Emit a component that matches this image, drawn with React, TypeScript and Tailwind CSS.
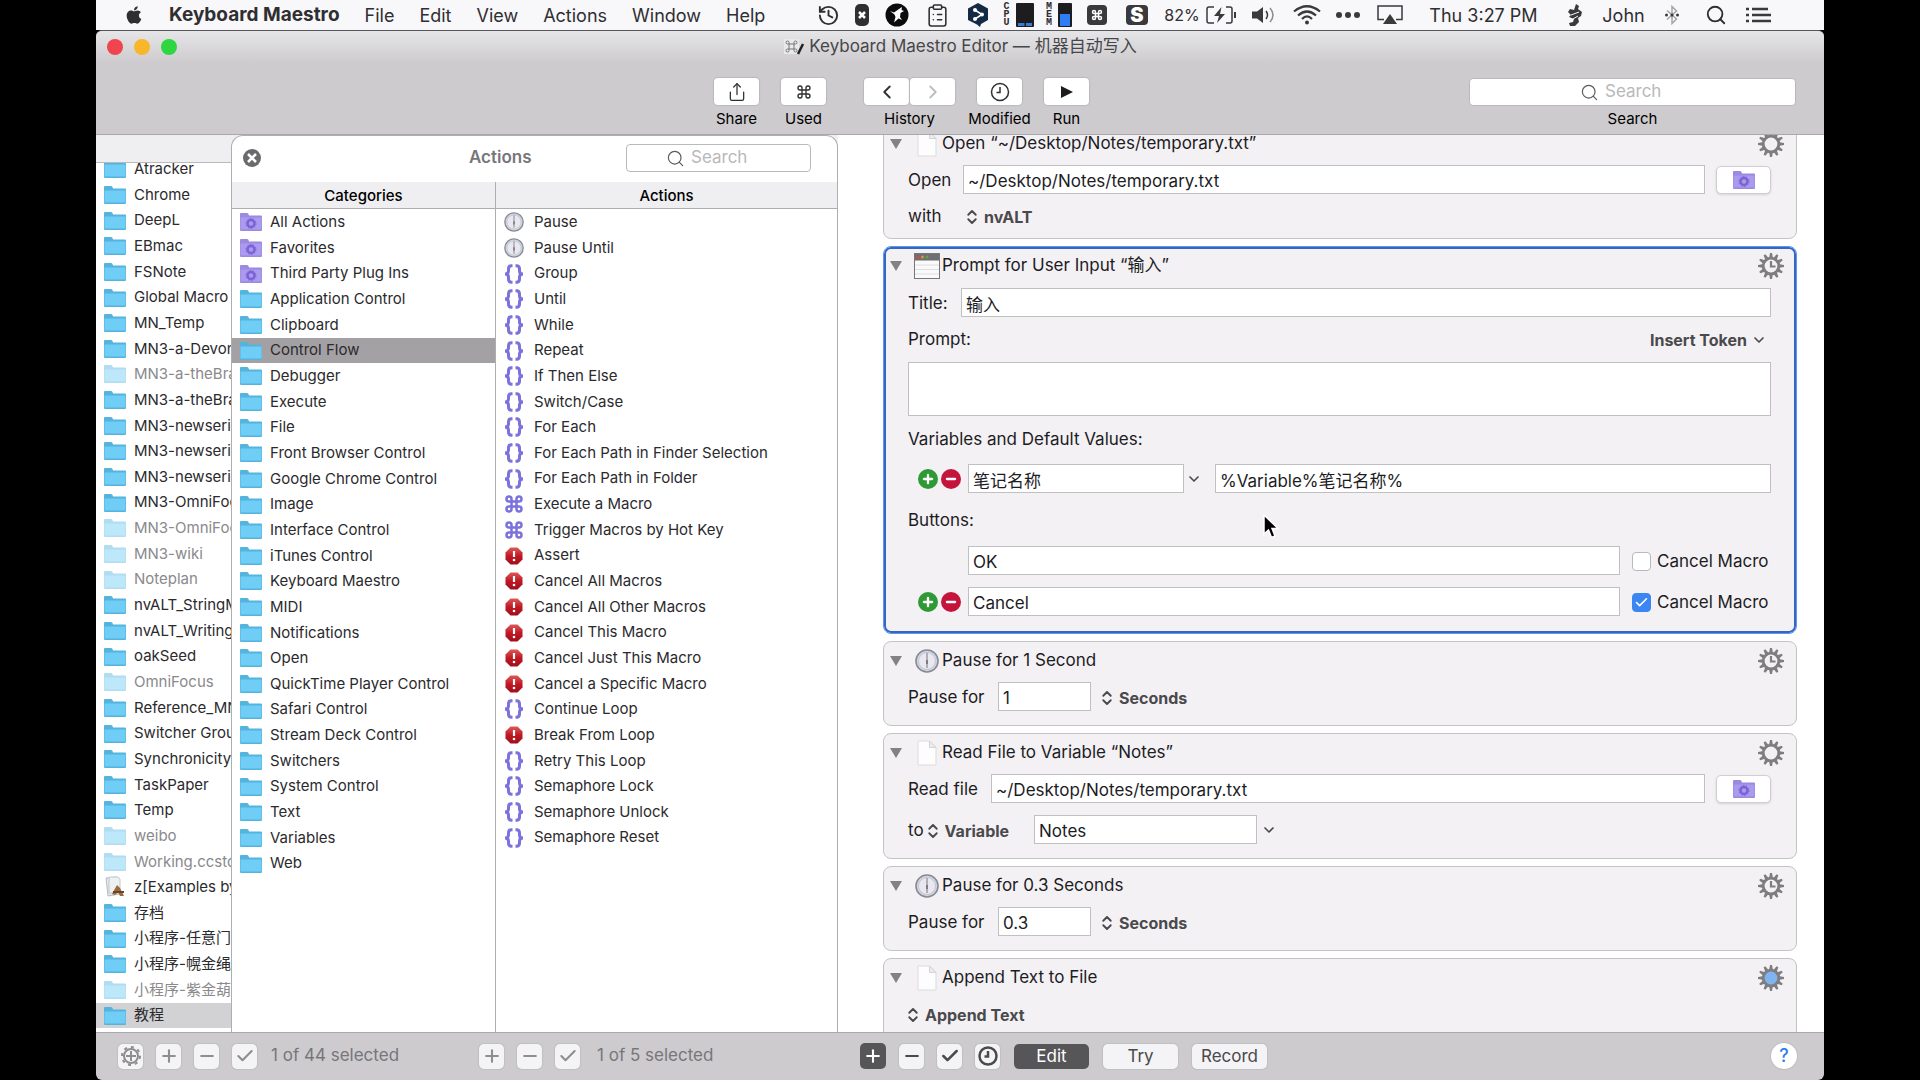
import React from 'react';
import { FaApple } from 'react-icons/fa';
import { Check, ChevronDown, ChevronLeft, ChevronRight, ChevronsUpDown, ClipboardList, Command, History, Minus, Plus, Search, Share } from 'lucide-react';

type Kind = 'folder' | 'smart' | 'file' | 'pause' | 'braces' | 'command' | 'stop';

interface Row {
  name: string;
  kind?: Kind;
  dim?: boolean;
}

const macroGroups: Row[] = [
  { name: 'Atracker' },
  { name: 'Chrome' },
  { name: 'DeepL' },
  { name: 'EBmac' },
  { name: 'FSNote' },
  { name: 'Global Macro' },
  { name: 'MN_Temp' },
  { name: 'MN3-a-Devonthink' },
  { name: 'MN3-a-theBrain', dim: true },
  { name: 'MN3-a-theBrain' },
  { name: 'MN3-newseries' },
  { name: 'MN3-newseries' },
  { name: 'MN3-newseries' },
  { name: 'MN3-OmniFocus' },
  { name: 'MN3-OmniFocus', dim: true },
  { name: 'MN3-wiki', dim: true },
  { name: 'Noteplan', dim: true },
  { name: 'nvALT_StringMN' },
  { name: 'nvALT_Writing' },
  { name: 'oakSeed' },
  { name: 'OmniFocus', dim: true },
  { name: 'Reference_MN' },
  { name: 'Switcher Group' },
  { name: 'Synchronicity' },
  { name: 'TaskPaper' },
  { name: 'Temp' },
  { name: 'weibo', dim: true },
  { name: 'Working.ccstore', dim: true },
  { name: 'z[Examples by', kind: 'file' },
  { name: '存档' },
  { name: '小程序-任意门' },
  { name: '小程序-幌金绳' },
  { name: '小程序-紫金葫芦', dim: true },
  { name: '教程' },
];

const categories: Row[] = [
  { name: 'All Actions', kind: 'smart' },
  { name: 'Favorites', kind: 'smart' },
  { name: 'Third Party Plug Ins', kind: 'smart' },
  { name: 'Application Control' },
  { name: 'Clipboard' },
  { name: 'Control Flow' },
  { name: 'Debugger' },
  { name: 'Execute' },
  { name: 'File' },
  { name: 'Front Browser Control' },
  { name: 'Google Chrome Control' },
  { name: 'Image' },
  { name: 'Interface Control' },
  { name: 'iTunes Control' },
  { name: 'Keyboard Maestro' },
  { name: 'MIDI' },
  { name: 'Notifications' },
  { name: 'Open' },
  { name: 'QuickTime Player Control' },
  { name: 'Safari Control' },
  { name: 'Stream Deck Control' },
  { name: 'Switchers' },
  { name: 'System Control' },
  { name: 'Text' },
  { name: 'Variables' },
  { name: 'Web' },
];

const actions: Row[] = [
  { name: 'Pause', kind: 'pause' },
  { name: 'Pause Until', kind: 'pause' },
  { name: 'Group', kind: 'braces' },
  { name: 'Until', kind: 'braces' },
  { name: 'While', kind: 'braces' },
  { name: 'Repeat', kind: 'braces' },
  { name: 'If Then Else', kind: 'braces' },
  { name: 'Switch/Case', kind: 'braces' },
  { name: 'For Each', kind: 'braces' },
  { name: 'For Each Path in Finder Selection', kind: 'braces' },
  { name: 'For Each Path in Folder', kind: 'braces' },
  { name: 'Execute a Macro', kind: 'command' },
  { name: 'Trigger Macros by Hot Key', kind: 'command' },
  { name: 'Assert', kind: 'stop' },
  { name: 'Cancel All Macros', kind: 'stop' },
  { name: 'Cancel All Other Macros', kind: 'stop' },
  { name: 'Cancel This Macro', kind: 'stop' },
  { name: 'Cancel Just This Macro', kind: 'stop' },
  { name: 'Cancel a Specific Macro', kind: 'stop' },
  { name: 'Continue Loop', kind: 'braces' },
  { name: 'Break From Loop', kind: 'stop' },
  { name: 'Retry This Loop', kind: 'braces' },
  { name: 'Semaphore Lock', kind: 'braces' },
  { name: 'Semaphore Unlock', kind: 'braces' },
  { name: 'Semaphore Reset', kind: 'braces' },
];

/* ---------- Icons ---------- */

const FolderIcon = ({ smart = false }: { smart?: boolean }) => (
  <svg width="22" height="20" viewBox="0 0 22 20" className="shrink-0">
    <path d="M0 2 Q0 1 1 1 H7 Q8 1 8.500 2 L9 3.500 H21 Q22 3.500 22 4.500 V18 Q22 19 21 19 H1 Q0 19 0 18 Z" fill={smart ? '#9a8ae0' : '#55b4de'} />
    <path d="M0.500 5.500 H21.500 V17.500 H0.500 Z" fill={smart ? '#ab9bee' : '#6fcdf6'} />
    {smart && <circle cx="11" cy="11.500" r="3.500" fill="none" stroke="#7b63d6" strokeWidth="2.500" />}
    {smart && <circle cx="11" cy="11.500" r="5" fill="none" stroke="#7b63d6" strokeWidth="1" strokeDasharray="1.500 1.600" />}
  </svg>
);

const ExamplesIcon = () => (
  <svg width="22" height="22" viewBox="0 0 22 22" className="shrink-0">
    <path d="M2 2 L13 1 L16 18 L4 20 Z" fill="#e4e8ea" stroke="#b6bcc0" strokeWidth="1" />
    <path d="M5 1 H14 L16 3 V17 H5 Z" fill="#eef1f2" stroke="#c4c8ca" strokeWidth="1" />
    <path d="M8 18 L13 9 L16 12 L20 20 H16 L14 16 L11 19 Z" fill="#9a6b42" />
    <path d="M9 16 H20" stroke="#6a4526" strokeWidth="2" />
  </svg>
);

const PauseIcon = ({ size = 20 }: { size?: number }) => (
  <svg width={size} height={size} viewBox="0 0 24 24" className="shrink-0">
    <circle cx="12" cy="12" r="11" fill="#d3d7e0" stroke="#878a94" strokeWidth="1.600" />
    <circle cx="12" cy="12" r="8.500" fill="#e9e8f0" stroke="#c2c5d0" strokeWidth="1" />
    <path d="M12 4 V19" stroke="#9c949f" strokeWidth="1.400" />
    <path d="M12 11 V15" stroke="#7a7480" strokeWidth="1.800" />
  </svg>
);

const BracesIcon = () => (
  <svg width="20" height="20" viewBox="0 0 20 20" className="shrink-0" fill="none" stroke="#7b72dc" strokeWidth="3">
    <path d="M8.500 1.700 H7.500 Q4.500 1.700 4.500 5 V7 Q4.500 10 1 10 Q4.500 10 4.500 13 V15 Q4.500 18.300 7.500 18.300 H8.500" />
    <path d="M11.500 1.700 H12.500 Q15.500 1.700 15.500 5 V7 Q15.500 10 19 10 Q15.500 10 15.500 13 V15 Q15.500 18.300 12.500 18.300 H11.500" />
  </svg>
);

const StopIcon = () => (
  <svg width="20" height="20" viewBox="0 0 20 20" className="shrink-0">
    <defs>
      <linearGradient id="stopRed" x1="0" y1="0" x2="0" y2="1">
        <stop offset="0" stopColor="#dc5a5a" />
        <stop offset="0.500" stopColor="#bf1824" />
        <stop offset="1" stopColor="#a00f1c" />
      </linearGradient>
    </defs>
    <path d="M6.500 1.500 H13.500 L18.500 6.500 V13.500 L13.500 18.500 H6.500 L1.500 13.500 V6.500 Z" fill="url(#stopRed)" />
    <path d="M10 5 V11" stroke="#fff" strokeWidth="2.200" />
    <circle cx="10" cy="14" r="1.300" fill="#fff" />
  </svg>
);

const PageIcon = () => (
  <svg width="24" height="26" viewBox="0 0 24 26" className="shrink-0">
    <path d="M3 1 H14.500 L21 7.500 V25 H3 Z" fill="#fdfdfd" stroke="#dcdbdd" strokeWidth="1" />
    <path d="M14.500 1 V7.500 H21 Z" fill="#ececee" stroke="#d4d4d6" strokeWidth="1" />
  </svg>
);

const WindowIcon = () => (
  <svg width="26" height="26" viewBox="0 0 26 26" className="shrink-0">
    <rect x="0.500" y="0.500" width="25" height="25" fill="#fafafa" stroke="#77777a" />
    <rect x="1" y="1" width="24" height="6.500" fill="#706e70" />
    <circle cx="4" cy="4" r="1.500" fill="#d8473d" />
    <circle cx="8.500" cy="4" r="1.500" fill="#c9a13a" />
    <circle cx="13" cy="4" r="1.500" fill="#5da845" />
    <path d="M1 12 H25 M1 16.500 H25 M1 21 H25" stroke="#dedde0" />
  </svg>
);

const TEETH = [0, 30, 60, 90, 120, 150, 180, 210, 240, 270, 300, 330];

const GearIcon = ({ variant }: { variant: 'plain' | 'clock' | 'blue' }) => (
  <svg width="26" height="26" viewBox="0 0 26 26">
    {TEETH.map((angle) => (
      <path key={angle} d="M12 0 H14 L15 5.500 H11 Z" fill="#7e7d80" transform={`rotate(${angle} 13 13)`} />
    ))}
    <circle cx="13" cy="13" r="7.800" fill={variant === 'blue' ? '#7fb4f0' : '#f3f1f4'} stroke="#7e7d80" strokeWidth="2.800" />
    {variant === 'clock' && <path d="M13 8 V13.500 H17.500" fill="none" stroke="#7e7d80" strokeWidth="2.200" />}
  </svg>
);

const ClockIcon = ({ size = 20, strokeWidth = 2 }: { size?: number; strokeWidth?: number }) => (
  <svg width={size} height={size} viewBox="0 0 20 20" fill="none" stroke="currentColor" strokeWidth={strokeWidth}>
    <circle cx="10" cy="10" r="8.500" />
    <path d="M10 5 V10.500 H6.500" />
  </svg>
);

const rowIcon = (kind: Kind = 'folder') => {
  if (kind === 'smart') return <FolderIcon smart />;
  if (kind === 'file') return <ExamplesIcon />;
  if (kind === 'pause') return <PauseIcon />;
  if (kind === 'braces') return <BracesIcon />;
  if (kind === 'command') return <Command size={20} strokeWidth={3} className="shrink-0 text-[#7b72dc]" />;
  if (kind === 'stop') return <StopIcon />;
  return <FolderIcon />;
};

/* ---------- Menu bar ---------- */

const MenuBar = () => (
  <header className="flex h-[30px] shrink-0 items-center bg-[#f8f7fa] pr-12 pl-7 text-[18px] text-[#2f2e31]">
    <FaApple size={20} className="shrink-0" />
    <nav className="flex flex-1 items-center gap-[25px] pl-[25px] whitespace-nowrap">
      <button className="text-[19px] leading-6 font-bold">Keyboard Maestro</button>
      <button>File</button>
      <button>Edit</button>
      <button>View</button>
      <button>Actions</button>
      <button>Window</button>
      <button>Help</button>
    </nav>
    <div className="flex shrink-0 items-center *:flex *:shrink-0 *:items-center *:justify-center">
      <span className="w-[34px]"><History size={23} /></span>
      <span className="w-[33px]">
        <svg width="14" height="22" viewBox="0 0 14 22">
          <rect width="14" height="22" rx="5" fill="#2f2e31" />
          <path d="M4 8 L10 14 M10 8 L4 14" stroke="#fff" strokeWidth="2.500" />
        </svg>
      </span>
      <span className="w-[38px]">
        <svg width="24" height="24" viewBox="0 0 24 24">
          <circle cx="12" cy="12" r="11.500" fill="#0b0b0c" />
          <path d="M5 8 L9 9.500 L14 6 L17 4 L16.500 7 L19 8 L15.500 10 L15 14 L17 17 L13.500 15.500 L9 19.500 L10.500 14 L9.500 11.500 Z" fill="#fff" />
        </svg>
      </span>
      <span className="w-[42px]"><ClipboardList size={25} strokeWidth={1.5} /></span>
      <span className="w-[40px]">
        <svg width="22" height="26" viewBox="0 0 22 26">
          <path d="M11 1 L21 6.500 V18 L14 22 L13 25 L10 22.500 L1 18 V6.500 Z" fill="#142b45" />
          <path d="M8 8 L15 12.500 L8 17" fill="none" stroke="#fff" strokeWidth="1.500" />
          <circle cx="8" cy="8" r="2" fill="#fff" />
          <circle cx="15" cy="12.500" r="2" fill="#fff" />
          <circle cx="8" cy="17" r="2" fill="#fff" />
        </svg>
      </span>
      <span className="w-[41px] gap-1">
        <span className="w-2 font-['Liberation_Mono'] text-[10px] leading-[8px] font-bold break-all">CPU</span>
        <svg width="18" height="24" viewBox="0 0 18 24">
          <rect width="18" height="24" rx="1" fill="#1d1c1f" />
          <path d="M2 21.500 H8.500 M10 21.500 H16" stroke="#3a7ad0" strokeWidth="3" />
        </svg>
      </span>
      <span className="w-[40px] gap-1">
        <span className="w-2 font-['Liberation_Mono'] text-[10px] leading-[8px] font-bold break-all">MEM</span>
        <svg width="14" height="24" viewBox="0 0 14 24">
          <rect width="14" height="24" rx="1" fill="#1d1c1f" />
          <rect x="2" y="11" width="10" height="12" fill="#2e7cf6" />
        </svg>
      </span>
      <span className="w-[36px]">
        <span className="rounded-sm bg-[#3a393c] p-1 text-white"><Command size={12} strokeWidth={3} /></span>
      </span>
      <span className="w-[44px]">
        <span className="h-5 w-[22px] rounded-sm bg-[#3a393c] text-center text-[20px] leading-5 font-black text-white">S</span>
      </span>
      <span className="w-[82px] gap-1.5 text-[16px]">
        82%
        <svg width="30" height="18" viewBox="0 0 30 18" fill="none" stroke="#3a393c" strokeWidth="1.500">
          <path d="M8 1 H3 Q1 1 1 3 V15 Q1 17 3 17 H8 M20 1 H24 Q26 1 26 3 V15 Q26 17 24 17 H20" />
          <path d="M29 6 V12" strokeWidth="2" />
          <path d="M15.500 1 L8 10 H13 L11 17 L19 8 H14 Z" fill="#3a393c" stroke="none" />
        </svg>
      </span>
      <span className="w-[45px]">
        <svg width="24" height="20" viewBox="0 0 24 20" fill="none" stroke="#3a393c" strokeWidth="1.500">
          <path d="M0 6.500 H5 L11 2 V18 L5 13.500 H0 Z" fill="#3a393c" stroke="none" />
          <path d="M14 6 Q17 10 14 14" />
          <path d="M18 3 Q24 10 18 17" stroke="#8b8a8d" />
        </svg>
      </span>
      <span className="w-[41px]">
        <svg width="28" height="20" viewBox="0 0 28 20" fill="none" stroke="#3a393c" strokeWidth="2.200">
          <path d="M1 6.500 Q14 -4 27 6.500" />
          <path d="M5 10.500 Q14 2.500 23 10.500" />
          <path d="M9 14 Q14 9 19 14" />
          <circle cx="14" cy="17.500" r="2" fill="#3a393c" stroke="none" />
        </svg>
      </span>
      <span className="w-[41px] gap-[3px]">
        <i className="size-1.5 rounded-full bg-[#3a393c]" />
        <i className="size-1.5 rounded-full bg-[#3a393c]" />
        <i className="size-1.5 rounded-full bg-[#3a393c]" />
      </span>
      <span className="w-[43px]">
        <svg width="26" height="20" viewBox="0 0 26 20">
          <path d="M7 14.500 H1 V1 H25 V14.500 H19" fill="none" stroke="#3a393c" strokeWidth="1.500" />
          <path d="M13 9 L20 19 H6 Z" fill="#3a393c" />
        </svg>
      </span>
      <span className="w-[145px] whitespace-nowrap">Thu 3:27 PM</span>
      <span className="w-[38px]">
        <svg width="16" height="22" viewBox="0 0 16 22">
          <path d="M9 0 L12 2 L11 5 L15 8 L14 12 L11 14 L12 18 L8 22 H3 L2 19 L6 18 L7 15 L2 13 L4 11 L1 8 L3 5 L7 6 Z" fill="#3a393c" />
          <path d="M4 11 L12 8 M6 15 L11 12" stroke="#f8f7fa" strokeWidth="1" />
        </svg>
      </span>
      <span className="w-[59px]">John</span>
      <span className="w-[37px]">
        <svg width="16" height="20" viewBox="0 0 16 20" fill="none">
          <path d="M3 5.500 L12.500 14 L8 18.500 V1.500 L12.500 6 L3 14.500" stroke="#a5a4a7" strokeWidth="1.500" />
          <circle cx="2.500" cy="10" r="1.500" fill="#3a393c" />
          <circle cx="8" cy="10" r="1.500" fill="#3a393c" />
          <circle cx="13.500" cy="10" r="1.500" fill="#3a393c" />
        </svg>
      </span>
      <span className="w-[52px]"><Search size={22} /></span>
      <span className="w-[34px]">
        <svg width="26" height="16" viewBox="0 0 26 16" stroke="#3a393c" strokeWidth="2.500">
          <path d="M0 2 H3 M6 2 H22 M0 8 H3 M6 8 H25 M0 14 H3 M6 14 H25" />
        </svg>
      </span>
    </div>
  </header>
);

/* ---------- Title bar and toolbar ---------- */

const toolButton = 'flex h-[27px] w-[45px] items-center justify-center rounded-[4px] bg-white text-[#2f2e31] shadow-[0_0_1px_1px_#bab9bb]';

const ToolItem = ({ label, className, children }: { label: string; className: string; children: React.ReactNode }) => (
  <div className={`flex flex-col items-center gap-1.5 ${className}`}>
    <div className="flex gap-px">{children}</div>
    <span className="text-[15px] leading-4">{label}</span>
  </div>
);

const SearchField = () => (
  <span className="flex h-7 w-full items-center justify-center gap-1.5 rounded-[4px] border border-[#bab9bb] bg-white">
    <Search size={19} strokeWidth={1.5} className="text-[#5b5a5d]" />
    <input type="search" aria-label="Search" placeholder="Search" className="w-20 text-[17px] outline-none placeholder:text-[#b9b8bb]" />
  </span>
);

const TitleBar = () => (
  <div className="shrink-0 rounded-t-md border-t border-b border-t-[#57565a] border-b-[#a9a8aa] bg-[#cdcbce]">
    <div className="grid h-8 grid-cols-[1fr_auto_1fr] items-center rounded-t-md bg-linear-to-b from-[#e6e5e7] to-[#cdcbce]">
      <div className="flex gap-[11px] pl-[11px]">
        <button aria-label="Close" className="size-4 rounded-full bg-[#f0444f]" />
        <button aria-label="Minimize" className="size-4 rounded-full bg-[#f8b62b]" />
        <button aria-label="Zoom" className="size-4 rounded-full bg-[#2fd640]" />
      </div>
      <h1 className="flex items-center gap-1 text-[17px] text-[#474649]">
        <svg width="22" height="18" viewBox="0 0 22 18" fill="none">
          <rect x="1" y="1" width="15" height="15" fill="#e9e8ea" />
          <path d="M6 6 H11 V11 H6 Z M6 6 V4.500 A1.500 1.500 0 1 0 4.500 6 Z M11 6 V4.500 A1.500 1.500 0 1 1 12.500 6 Z M6 11 V12.500 A1.500 1.500 0 1 1 4.500 11 Z M11 11 V12.500 A1.500 1.500 0 1 0 12.500 11 Z" stroke="#777" />
          <path d="M20 6 L15 16" stroke="#222" strokeWidth="2.500" />
        </svg>
        Keyboard Maestro Editor — 机器自动写入
      </h1>
    </div>
    <div className="grid grid-cols-[1fr_auto_1fr] items-start pt-[15px] pb-[7px]">
      <div className="flex justify-end gap-[22px] pr-[38px]">
        <ToolItem label="Share" className="w-[45px]">
          <button className={toolButton} aria-label="Share"><Share size={20} strokeWidth={1.5} /></button>
        </ToolItem>
        <ToolItem label="Used" className="w-[45px]">
          <button className={toolButton} aria-label="Used"><Command size={16} /></button>
        </ToolItem>
      </div>
      <div className="flex w-[192px] gap-[22px]">
        <ToolItem label="History" className="w-[91px] shrink-0">
          <button className={toolButton} aria-label="Back"><ChevronLeft size={22} /></button>
          <button className={toolButton} aria-label="Forward"><ChevronRight size={22} className="text-[#bdbcbf]" /></button>
        </ToolItem>
        <ToolItem label="Modified" className="w-[45px] shrink-0">
          <button className={toolButton} aria-label="Modified"><ClockIcon strokeWidth={1.5} /></button>
        </ToolItem>
        <ToolItem label="Run" className="w-[45px] shrink-0">
          <button className={toolButton} aria-label="Run">
            <svg width="12" height="14" viewBox="0 0 12 14"><path d="M0 1 L12 7 L0 13 Z" fill="#1c1b1e" /></svg>
          </button>
        </ToolItem>
      </div>
      <label className="mr-7 flex w-[327px] flex-col items-center gap-[5px] justify-self-end">
        <SearchField />
        <span className="text-[15px] leading-4">Search</span>
      </label>
    </div>
  </div>
);

/* ---------- Lists ---------- */

interface ListRowsProps {
  rows: Row[];
  selected?: string;
  className: string;
  rowClass: string;
  selectedClass?: string;
}

const ListRows: React.FC<ListRowsProps> = ({ rows, selected, className, rowClass, selectedClass = '' }) => (
  <ul className={`grid shrink-0 auto-rows-fr text-[15px] text-[#2b2a2d] ${className}`}>
    {rows.map((row, index) => (
      <li key={index} className="min-h-0 pt-px">
        <button
          className={`flex h-full w-full items-center overflow-hidden text-left whitespace-nowrap ${rowClass} ${
            row.name === selected ? selectedClass : ''
          } ${row.dim ? 'text-[#8a898c] *:[svg]:opacity-45' : ''}`}
        >
          {rowIcon(row.kind)}
          <span>{row.name}</span>
        </button>
      </li>
    ))}
  </ul>
);

const GroupColumn = () => (
  <aside className="flex w-[135px] shrink-0 flex-col bg-white">
    <div className="h-7 shrink-0 border-b border-[#bab9bb] bg-[#efeef0]" />
    <div className="flex flex-1 flex-col justify-end overflow-hidden pb-1">
      <ListRows rows={macroGroups} selected="教程" className="h-[872px]" rowClass="gap-2 pl-2" selectedClass="bg-[#d2d1d3]" />
    </div>
  </aside>
);

const ActionsPanel = () => (
  <section className="w-[607px] shrink-0 bg-[#efeef0]">
    <div className="flex h-full flex-col overflow-hidden rounded-t-xl border-x border-t border-[#aeadaf] bg-white">
      <div className="flex h-[46px] shrink-0 items-center pr-[26px] pb-0.5 pl-[11px]">
        <button aria-label="Close actions" className="flex size-[18px] items-center justify-center rounded-full bg-[#6b6a6d]">
          <svg width="10" height="10" viewBox="0 0 10 10" stroke="#fff" strokeWidth="2.500"><path d="M1 1 L9 9 M9 1 L1 9" /></svg>
        </button>
        <h2 className="flex-1 pl-[208px] text-[17px] font-semibold text-[#77767a]">Actions</h2>
        <div className="w-[185px]"><SearchField /></div>
      </div>
      <div className="flex flex-1">
        <div className="w-[264px] border-r border-[#aeadaf]">
          <h3 className="h-[27px] border-b border-[#aeadaf] bg-[#efeef0] text-center text-[15px] leading-[27px] font-medium">Categories</h3>
          <ListRows rows={categories} selected="Control Flow" className="h-[667px]" rowClass="gap-2 pl-2" selectedClass="bg-[#a3a1a4]" />
        </div>
        <div className="flex-1">
          <h3 className="h-[27px] border-b border-[#aeadaf] bg-[#efeef0] text-center text-[15px] leading-[27px] font-medium">Actions</h3>
          <ListRows rows={actions} className="h-[641px]" rowClass="gap-2.5 pl-2" />
        </div>
      </div>
    </div>
  </section>
);

/* ---------- Action cards ---------- */

interface CardProps {
  title: string;
  icon: React.ReactNode;
  gear: 'plain' | 'clock' | 'blue';
  selected?: boolean;
  className: string;
  children: React.ReactNode;
}

const Card: React.FC<CardProps> = ({ title, icon, gear, selected = false, className, children }) => (
  <article
    className={`shrink-0 rounded-lg border bg-[#f3f1f4] pr-[25px] pl-[24px] ${
      selected ? 'border-[#5d97ea] shadow-[inset_0_0_0_2px_#3467c4]' : 'border-[#c3c2c5]'
    } ${className}`}
  >
    <div className="-mx-[18px] flex h-10 items-center pb-[3px]">
      <button aria-label="Collapse" className="w-[22px]">
        <svg width="12" height="10" viewBox="0 0 12 10"><path d="M0 0 H12 L6 10 Z" fill="#828184" /></svg>
      </button>
      <span className="flex w-[30px] justify-center">{icon}</span>
      <h2 className="flex-1 pt-px">{title}</h2>
      <button aria-label="Action options" className="pr-[5px]"><GearIcon variant={gear} /></button>
    </div>
    {children}
  </article>
);

const field = 'h-[29px] min-w-0 border border-[#c0bfc2] bg-white px-1 pt-0.5 outline-none';

const Stepper = ({ value, label }: { value: string; label: string }) => (
  <span className="flex items-center gap-1 text-[16px] font-bold text-[#4a494c]">
    <ChevronsUpDown size={18} strokeWidth={2.5} className="-mx-1 shrink-0" />
    <select aria-label={label} defaultValue={value} className="appearance-none pl-[3px] outline-none">
      <option>{value}</option>
    </select>
  </span>
);

const FolderButton = () => (
  <button aria-label="Choose file" className="ml-[11px] flex h-7 w-[55px] shrink-0 items-center justify-center rounded-[5px] border border-[#cfced1] bg-white shadow-sm">
    <FolderIcon smart />
  </button>
);

const AddRemove = () => (
  <span className="flex w-[60px] gap-[3px] pt-px pl-2.5">
    <button aria-label="Add" className="flex size-5 items-center justify-center rounded-full bg-[#2f9a35] text-white"><Plus size={14} strokeWidth={4} /></button>
    <button aria-label="Remove" className="flex size-5 items-center justify-center rounded-full bg-[#c4143c] text-white"><Minus size={14} strokeWidth={4} /></button>
  </span>
);

const CancelBox = ({ checked = false }: { checked?: boolean }) => (
  <label className="ml-3 flex items-center gap-1.5 pt-0.5 whitespace-nowrap">
    <span className="grid size-[19px]">
      <input
        type="checkbox"
        defaultChecked={checked}
        className="peer col-start-1 row-start-1 size-[19px] appearance-none rounded-[4px] border border-[#b9b8bb] bg-white checked:border-[#3b86f2] checked:bg-[#3b86f2]"
      />
      <Check size={15} strokeWidth={2.5} className="pointer-events-none invisible col-start-1 row-start-1 place-self-center text-white peer-checked:visible" />
    </span>
    <span className="w-[114px]">Cancel Macro</span>
  </label>
);

const PauseCard = ({ title, value }: { title: string; value: string }) => (
  <Card title={title} icon={<PauseIcon size={24} />} gear="clock" className="h-[85px]">
    <div className="flex items-center">
      <label className="flex items-center"><span className="w-[90px] pt-[3px]">Pause for</span><input className={`${field} w-[93px]`} defaultValue={value} /></label>
      <span className="ml-[11px] pt-[3px]"><Stepper value="Seconds" label="Time unit" /></span>
    </div>
  </Card>
);

const Editor = () => (
  <main className="flex flex-1 flex-col overflow-hidden bg-white pr-[27px] pl-[45px] text-[17px] text-[#1d1c1f]">
    {/* The list is scrolled a little, so the first card starts above the edge */}
    <div className="-mt-[11px] flex flex-col gap-[7px]">
      <Card title="Open “~/Desktop/Notes/temporary.txt”" icon={<PageIcon />} gear="plain" className="h-[115px]">
        <label className="flex items-center">
          <span className="w-[55px] pt-0.5">Open</span>
          <input className={`${field} flex-1`} defaultValue="~/Desktop/Notes/temporary.txt" />
          <FolderButton />
        </label>
        <div className="flex h-[46px] items-center">
          <span className="w-[59px]">with</span>
          <Stepper value="nvALT" label="Application" />
        </div>
      </Card>

      <Card title="Prompt for User Input “输入”" icon={<WindowIcon />} gear="clock" selected className="h-[388px]">
        <label className="flex items-center pt-px">
          <span className="w-[53px] pt-[3px]">Title:</span>
          <input className={`${field} flex-1`} defaultValue="输入" />
        </label>
        <div className="flex h-[45px] items-center justify-between">
          <label htmlFor="prompt">Prompt:</label>
          <button className="flex items-center gap-1 pr-1 text-[16px] font-bold text-[#4a494c]">
            Insert Token
            <ChevronDown size={16} strokeWidth={2.5} />
          </button>
        </div>
        <textarea id="prompt" className="block h-[54px] w-full resize-none border border-[#c0bfc2] bg-white outline-none" />
        <h3 className="h-12 leading-[47px]">Variables and Default Values:</h3>
        <div className="flex items-center">
          <AddRemove />
          <input aria-label="Variable name" className={`${field} w-[216px]`} defaultValue="笔记名称" />
          <button aria-label="Choose variable" className="flex w-[31px] pl-0.5"><ChevronDown size={16} strokeWidth={2.5} className="text-[#4a494c]" /></button>
          <input aria-label="Default value" className={`${field} flex-1`} defaultValue="%Variable%笔记名称%" />
        </div>
        <h3 className="h-[53px] leading-[55px]">Buttons:</h3>
        <div className="flex items-center pl-[60px]">
          <input aria-label="Button 1" className={`${field} flex-1`} defaultValue="OK" />
          <CancelBox />
        </div>
        <div className="flex items-center pt-3">
          <AddRemove />
          <input aria-label="Button 2" className={`${field} flex-1`} defaultValue="Cancel" />
          <CancelBox checked />
        </div>
      </Card>

      <PauseCard title="Pause for 1 Second" value="1" />

      <Card title="Read File to Variable “Notes”" icon={<PageIcon />} gear="plain" className="h-[126px]">
        <label className="flex items-center">
          <span className="w-[83px] pt-[3px]">Read file</span>
          <input className={`${field} flex-1`} defaultValue="~/Desktop/Notes/temporary.txt" />
          <FolderButton />
        </label>
        <div className="flex items-center pt-3">
          <span className="flex w-[126px] items-center gap-1 pt-0.5">to<Stepper value="Variable" label="Destination" /></span>
          <input aria-label="Variable" className={`${field} w-[223px]`} defaultValue="Notes" />
          <button aria-label="Choose variable" className="pl-1"><ChevronDown size={16} strokeWidth={2.5} className="text-[#4a494c]" /></button>
        </div>
      </Card>

      <PauseCard title="Pause for 0.3 Seconds" value="0.3" />

      <Card title="Append Text to File" icon={<PageIcon />} gear="blue" className="h-[160px]">
        <div className="flex h-8 items-center"><Stepper value="Append Text" label="Append mode" /></div>
      </Card>
    </div>
  </main>
);

/* ---------- Bottom bar ---------- */

const smallButton = 'flex size-[25px] items-center justify-center rounded-[5px] bg-[#f4f3f5] shadow-[0_0_1px_1px_#bfbec0]';

const BottomBar = () => (
  <footer className="flex h-12 shrink-0 items-center rounded-b-md border-t border-[#a9a8aa] bg-[#cdcbce] pr-[27px] pb-px text-[17px] text-[#4a494c]">
    <div className="flex w-[383px] items-center gap-[13px] pl-[22px] text-[#8e8d90]">
      <button aria-label="Group options" className={smallButton}>
        <svg width="20" height="20" viewBox="0 0 20 20" fill="none" stroke="currentColor" strokeWidth="2">
          <circle cx="10" cy="10" r="7" />
          <circle cx="10" cy="10" r="9" strokeDasharray="3 4" />
          <path d="M10 5 V15 M5 10 H15" />
        </svg>
      </button>
      <button aria-label="Add group" className={smallButton}><Plus size={20} strokeWidth={2.5} /></button>
      <button aria-label="Remove group" className={smallButton}><Minus size={20} strokeWidth={2.5} /></button>
      <button aria-label="Enable group" className={smallButton}><Check size={20} strokeWidth={2.5} /></button>
      <span className="pl-px text-[#77767a]">1 of 44 selected</span>
    </div>
    <div className="flex w-[381px] items-center gap-[13px] text-[#8e8d90]">
      <button aria-label="Add macro" className={smallButton}><Plus size={20} strokeWidth={2.5} /></button>
      <button aria-label="Remove macro" className={smallButton}><Minus size={20} strokeWidth={2.5} /></button>
      <button aria-label="Enable macro" className={smallButton}><Check size={20} strokeWidth={2.5} /></button>
      <span className="pl-1 text-[#77767a]">1 of 5 selected</span>
    </div>
    <div className="flex flex-1 items-center gap-[13px]">
      <button aria-label="Add action" className="flex size-[26px] items-center justify-center rounded-[5px] bg-[#565558] text-white"><Plus size={20} strokeWidth={2.5} /></button>
      <button aria-label="Remove action" className={smallButton}><Minus size={20} strokeWidth={2.5} /></button>
      <button aria-label="Enable action" className={smallButton}><Check size={20} strokeWidth={3} /></button>
      <button aria-label="Recent" className={smallButton}><ClockIcon strokeWidth={2.5} /></button>
      <div className="flex gap-3.5 pl-px *:h-[25px] *:w-[75px] *:rounded-[5px]">
        <button className="bg-[#565558] text-white">Edit</button>
        <button className="bg-[#f4f3f5] shadow-[0_0_1px_1px_#bfbec0]">Try</button>
        <button className="bg-[#f4f3f5] shadow-[0_0_1px_1px_#bfbec0]">Record</button>
      </div>
    </div>
    <button aria-label="Help" className="size-[26px] rounded-full bg-white text-[18px] leading-none font-medium text-[#2f7fe8] shadow-[0_0_1px_1px_#bfbec0]">?</button>
  </footer>
);

const App = () => {
  return (
    <div className="flex h-screen flex-col overflow-hidden bg-black px-24 font-['Inter','Noto_Sans_CJK_SC',sans-serif]">
      <MenuBar />
      <TitleBar />
      <div className="flex min-h-0 flex-1">
        <GroupColumn />
        <ActionsPanel />
        <Editor />
      </div>
      <BottomBar />
      {/* Mouse pointer */}
      <svg className="absolute top-[514px] left-[1262px]" width="18" height="26" viewBox="0 0 18 26">
        <path d="M2 1 V20 L6.500 16 L9.500 23.500 L13 22 L10 14.500 H16 Z" fill="#000" stroke="#fff" strokeWidth="1.500" />
      </svg>
    </div>
  );
};

export default App;
